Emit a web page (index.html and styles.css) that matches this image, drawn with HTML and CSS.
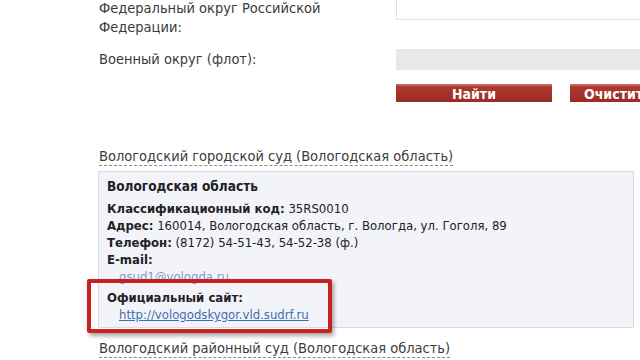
FILE: index.html
```html
<!DOCTYPE html>
<html lang="ru">
<head>
    <meta charset="UTF-8">
    <meta name="viewport" content="width=device-width, initial-scale=1.0">
    <title>Поиск суда</title>
    <link rel="stylesheet" href="styles.css">
</head>
<body>
    <div class="page">
        <div class="form-row first">
            <label class="label">Федеральный округ Российской Федерации:</label>
            <input class="field" type="text">
        </div>
        <div class="form-row second">
            <label class="label">Военный округ (флот):</label>
            <input class="field disabled" type="text" disabled>
        </div>
        <div class="buttons">
            <button class="btn">Найти</button>
            <button class="btn">Очистить</button>
        </div>

        <a class="court-title" href="#">Вологодский городской суд (Вологодская область)</a>
        <div class="court-box">
            <div class="region">Вологодская область</div>
            <div class="line"><b>Классификационный код:</b> 35RS0010</div>
            <div class="line"><b>Адрес:</b> 160014, Вологодская область, г. Вологда, ул. Гоголя, 89</div>
            <div class="line"><b>Телефон:</b> (8172) 54-51-43, 54-52-38 (ф.)</div>
            <div class="line"><b>E-mail:</b></div>
            <div class="line link-line"><a href="#" class="mail">gsud1@vologda.ru</a></div>
            <div class="official">
                <div class="line"><b>Официальный сайт:</b></div>
                <div class="line link-line"><a href="#">http://vologodskygor.vld.sudrf.ru</a></div>
            </div>
        </div>

        <a class="court-title next" href="#">Вологодский районный суд (Вологодская область)</a>
    </div>
</body>
</html>
```

FILE: styles.css
```css
body {
    margin: 0;
    background: #fff;
    overflow: hidden;
    font-family: "DejaVu Sans Condensed", "DejaVu Sans", sans-serif;
    color: #333;
}

.page {
    margin-top: -4px;
    padding-left: 99px;
}

/* search form */
.form-row {
    display: grid;
    grid-template-columns: 297px 300px;
}

.form-row.first .label {
    padding-top: 3px;
    width: 235px;
}

.form-row.second {
    margin-top: 12px;
    align-items: center;
}

.label {
    font-size: 14.5px;
    line-height: 19px;
    color: #3a3a3a;
}

.field {
    box-sizing: border-box;
    height: 24px;
    margin: 0;
    border: 1px solid #dfe3ea;
    background: #fff;
}

.field.disabled {
    height: 21px;
    background: #e7e8ea;
    border-color: #e2e4e8;
}

.buttons {
    display: flex;
    gap: 18px;
    margin: 14px 0 0 297px;
}

.btn {
    width: 156px;
    height: 18px;
    flex-shrink: 0;
    padding: 0;
    border: 0;
    border-top: 2px solid #c8625c;
    background: linear-gradient(#ad3a31, #9c2b23);
    color: #fff;
    font-family: "DejaVu Sans Condensed", "DejaVu Sans", sans-serif;
    font-weight: bold;
    font-size: 14px;
    line-height: 15px;
    text-align: center;
}

.btn + .btn {
    text-align: left;
    padding-left: 14px;
}

/* results */
.court-title {
    display: inline-block;
    margin-top: 46px;
    font-size: 14.5px;
    line-height: 17px;
    color: #3c3c3c;
    text-decoration: none;
    border-bottom: 1px dashed #8a8a8a;
}

.court-title.next {
    margin-top: 12px;
}

.court-box {
    width: 518px;
    margin: 5px 0 0 -1px;
    padding: 6px 8px 4px;
    background: #f3f4f9;
    border: 1px solid #d7dbe7;
    font-size: 13px;
    line-height: 17px;
    color: #222;
}

.region {
    font-weight: bold;
    font-size: 13.5px;
    line-height: 17px;
    margin-bottom: 5px;
}

.line b {
    font-size: 13px;
}

.link-line {
    padding-left: 12px;
}

.link-line a {
    color: #3b6db3;
    font-size: 13px;
}

.link-line a.mail {
    color: #7b9ccf;
}

.official {
    position: relative;
    margin-top: 4px;
}

/* red annotation frame */
.official::after {
    content: "";
    position: absolute;
    left: -20px;
    top: -10px;
    width: 237px;
    height: 46px;
    border: 4px solid #c9211e;
    border-radius: 2px;
    box-shadow: 2px 3px 4px rgba(0, 0, 0, 0.35);
}
```
